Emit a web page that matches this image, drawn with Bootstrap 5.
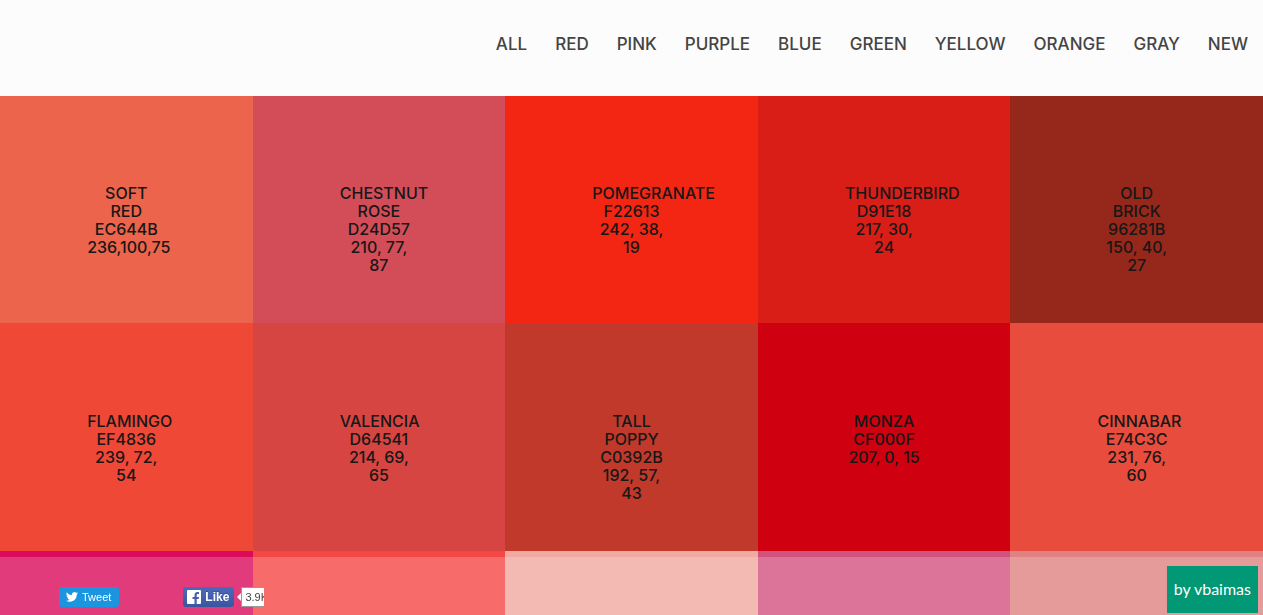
<!DOCTYPE html>
<html lang="en">
<head>
<meta charset="utf-8">
<meta name="viewport" content="width=device-width, initial-scale=1">
<title>Flat UI color picker</title>
<link href="https://cdn.jsdelivr.net/npm/bootstrap@5.3.0/dist/css/bootstrap.min.css" rel="stylesheet">
<style>
body { background: #fcfcfc; font-family: Inter, "Liberation Sans", sans-serif; font-size: 16px; line-height: 18px; font-weight: 500; color: #171717; }
.page-scroll { scrollbar-width: none; }
.page-scroll::-webkit-scrollbar { display: none; }
.site-header { min-height: 96px; padding: 0 15px 8px; }
.color-nav { column-gap: 28px; }
.color-nav .nav-link { color: #444; padding: 0; font-size: 17px; line-height: 24px; }
.color-nav .nav-link:hover { color: #000; }
.swatch { aspect-ratio: 10 / 9; overflow: hidden; }
.swatch-label { width: 31%; margin: 35% auto 0; }
.bottom-bar { background: rgba(255, 255, 255, .2); min-height: 58px; padding: 0 5px 2px 59px; }
.social { gap: 64px; padding-bottom: 6px; font-family: "Liberation Sans", sans-serif; font-size: 11px; font-weight: 400; line-height: 20px; }
.social-btn { height: 20px; padding: 0 8px 0 7px; border: 0; border-radius: 3px; font-size: 11px; line-height: 20px; color: #fff; gap: 4px; }
.tweet { background: #1b95e0; }
.like { background: linear-gradient(#4c69ba, #3b55a0); padding: 0 5px 0 4px; font-size: 12px; font-weight: 700; text-shadow: 0 -1px 0 #354c8c; }
.like-count { width: 30px; }
.like-number { width: 23px; height: 20px; border: 1px solid #999; border-right: 0; background: #fff; color: #444; padding-left: 3px; line-height: 18px; }
.credit { background: #019875; color: #fff; font-family: Lato, sans-serif; font-size: 16px; font-weight: 400; line-height: 19px; padding: 13px 7px 15px; }
.credit:hover { color: #fff; }
</style>
</head>
<body>
<div class="page-scroll vh-100 overflow-auto">
  <header class="site-header d-flex align-items-center justify-content-end">
    <nav class="nav color-nav flex-wrap justify-content-end" aria-label="Colors">
      <a class="nav-link" href="#all">ALL</a>
      <a class="nav-link" href="#red">RED</a>
      <a class="nav-link" href="#pink">PINK</a>
      <a class="nav-link" href="#purple">PURPLE</a>
      <a class="nav-link" href="#blue">BLUE</a>
      <a class="nav-link" href="#green">GREEN</a>
      <a class="nav-link" href="#yellow">YELLOW</a>
      <a class="nav-link" href="#orange">ORANGE</a>
      <a class="nav-link" href="#gray">GRAY</a>
      <a class="nav-link" href="#new">NEW</a>
    </nav>
  </header>
  <main class="row row-cols-5 g-0 text-center text-nowrap">
    <div class="col swatch" style="background:#EC644B"><div class="swatch-label">SOFT<br>RED<br>EC644B<br>236,100,75</div></div>
    <div class="col swatch" style="background:#D24D57"><div class="swatch-label">CHESTNUT<br>ROSE<br>D24D57<br>210, 77,<br>87</div></div>
    <div class="col swatch" style="background:#F22613"><div class="swatch-label">POMEGRANATE<br>F22613<br>242, 38,<br>19</div></div>
    <div class="col swatch" style="background:#D91E18"><div class="swatch-label">THUNDERBIRD<br>D91E18<br>217, 30,<br>24</div></div>
    <div class="col swatch" style="background:#96281B"><div class="swatch-label">OLD<br>BRICK<br>96281B<br>150, 40,<br>27</div></div>
    <div class="col swatch" style="background:#EF4836"><div class="swatch-label">FLAMINGO<br>EF4836<br>239, 72,<br>54</div></div>
    <div class="col swatch" style="background:#D64541"><div class="swatch-label">VALENCIA<br>D64541<br>214, 69,<br>65</div></div>
    <div class="col swatch" style="background:#C0392B"><div class="swatch-label">TALL<br>POPPY<br>C0392B<br>192, 57,<br>43</div></div>
    <div class="col swatch" style="background:#CF000F"><div class="swatch-label">MONZA<br>CF000F<br>207, 0, 15</div></div>
    <div class="col swatch" style="background:#E74C3C"><div class="swatch-label">CINNABAR<br>E74C3C<br>231, 76,<br>60</div></div>
    <div class="col swatch" style="background:#DB0A5B"></div>
    <div class="col swatch" style="background:#F64747"></div>
    <div class="col swatch" style="background:#F1A9A0"></div>
    <div class="col swatch" style="background:#D2527F"></div>
    <div class="col swatch" style="background:#E08283"></div>
  </main>
</div>
<footer class="bottom-bar fixed-bottom d-flex align-items-end justify-content-between">
  <div class="social d-flex">
    <button type="button" class="social-btn tweet d-flex align-items-center">
      <svg width="12" height="12" viewBox="0 0 24 24" fill="#fff" aria-hidden="true"><path d="M24 4.6a10 10 0 0 1-2.8.8 4.900 4.900 0 0 0 2.200-2.700 10 10 0 0 1-3.100 1.200 4.900 4.900 0 0 0-8.400 4.500A14 14 0 0 1 1.700 3.100a4.900 4.900 0 0 0 1.500 6.600 4.900 4.900 0 0 1-2.200-.6v.1a4.900 4.900 0 0 0 3.900 4.800 5 5 0 0 1-2.200.1 4.900 4.900 0 0 0 4.600 3.400A9.900 9.900 0 0 1 0 19.500 14 14 0 0 0 7.500 21.700c9.100 0 14-7.500 14-14v-.6A10 10 0 0 0 24 4.600z"/></svg>
      Tweet
    </button>
    <div class="d-flex">
      <button type="button" class="social-btn like d-flex align-items-center">
        <svg width="14" height="14" viewBox="0 0 14 14" aria-hidden="true"><rect width="14" height="14" rx="1" fill="#fff"/><path d="M7.500 14V9H5.500V7h2V5.200C7.500 3.200 8.700 2 10.500 2H12v2h-1c-.9 0-1.300.4-1.300 1.200V7H12l-.3 2h-2v5z" fill="#4560b0"/></svg>
        Like
      </button>
      <div class="like-count d-flex align-items-center justify-content-end overflow-hidden">
        <svg class="flex-shrink-0" width="6" height="8" viewBox="0 0 6 8" aria-hidden="true"><path d="M6 0L2 4l4 4z" fill="#fff"/></svg>
        <span class="like-number overflow-hidden text-nowrap">3.9K</span>
      </div>
    </div>
  </div>
  <a class="credit text-decoration-none" href="#vbaimas">by vbaimas</a>
</footer>
<script src="https://cdn.jsdelivr.net/npm/bootstrap@5.3.0/dist/js/bootstrap.bundle.min.js"></script>
</body>
</html>
